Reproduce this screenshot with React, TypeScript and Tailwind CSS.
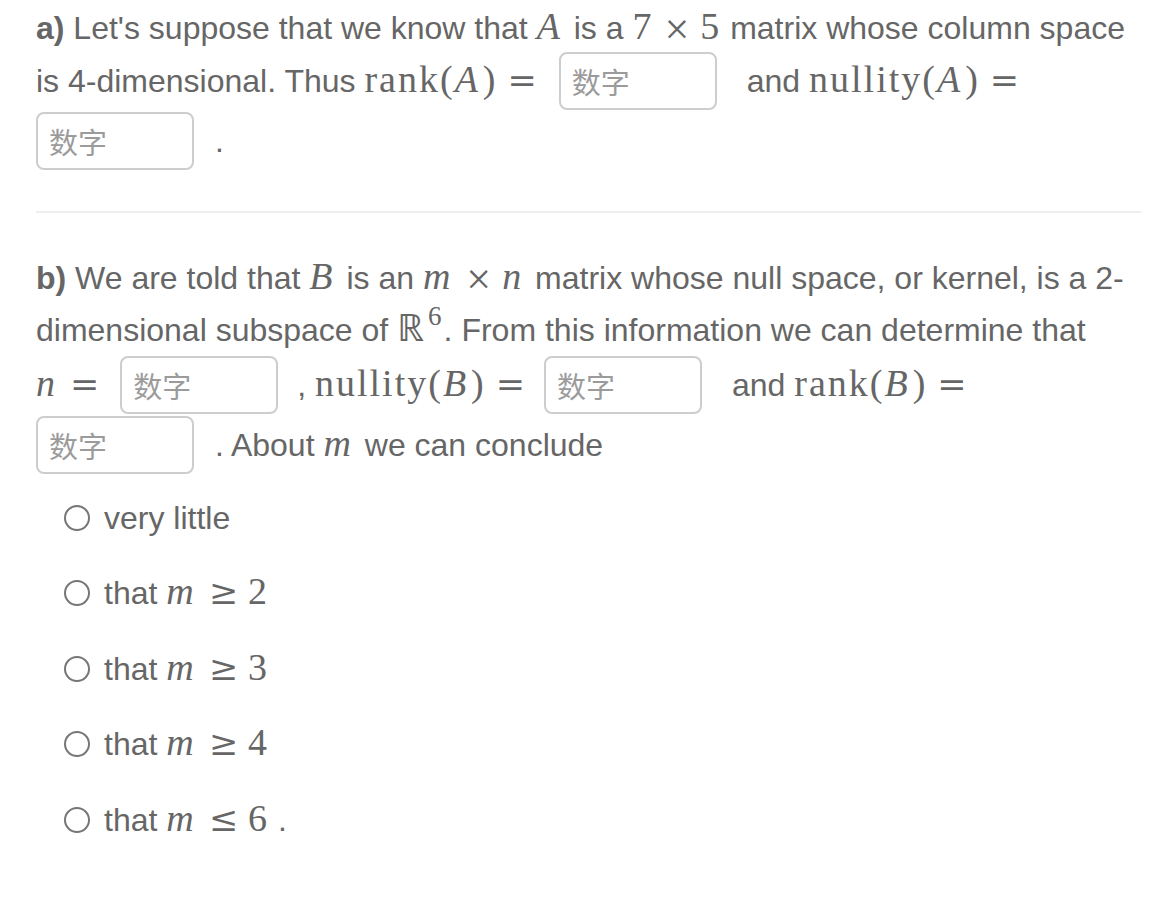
import React from 'react';

type Kids = { children?: React.ReactNode };

function Blank({ className = '' }: { className?: string }) {
  return (
    <input
      type="text"
      placeholder="数字"
      className={`box-border inline-block h-[58px] w-[158px] rounded-[8px] border-2 border-[#cdcdcd] bg-white px-[11px] align-top font-['Noto_Sans_CJK_SC',sans-serif] text-[29px] text-[#333] outline-none placeholder:text-[#9b9b9b] ${className}`}
    />
  );
}

// math runs (upright by default, variables go in <V>)
function M({ children }: Kids) {
  return (
    <span className="font-['Liberation_Serif',serif] text-[38px] leading-none tracking-[2px]">{children}</span>
  );
}

function V({ children }: Kids) {
  return <i className="mr-[3px] italic">{children}</i>;
}

// relation symbols are wider in the TeX fonts
function Rel({ children }: Kids) {
  return (
    <span className="mx-[10px] font-['DejaVu_Serif',serif] text-[35px] font-light tracking-normal">{children}</span>
  );
}

function Times() {
  return <span className="mx-[11px] align-[-5px] text-[44px] leading-[0] tracking-normal">×</span>;
}

function Radio({ children }: Kids) {
  return (
    <li className="flex h-[75.5px] items-center">
      <span className="ml-[28px] mr-[14px] box-border h-[26px] w-[26px] shrink-0 rounded-full border-2 border-[#767676] bg-white" />
      <span className="whitespace-nowrap">{children}</span>
    </li>
  );
}

export default function App() {
  return (
    <div className="min-h-[910px] w-full bg-white pl-[36px] pr-[31px] font-['Liberation_Sans',Arial,sans-serif] text-[32px] text-[#666]">
      {/* part a */}
      <section>
        <div className="h-[52px] whitespace-nowrap pt-[4px] leading-[48px]">
          <b>a)</b> Let's suppose that we know that{' '}
          <M>
            <V>A</V>
          </M>{' '}
          is a{' '}
          <M>
            7<Times />5
          </M>{' '}
          matrix whose column space
        </div>
        <div className="h-[58px] whitespace-nowrap leading-[58px]">
          is 4-dimensional. Thus{' '}
          <M>
            rank(<V>A</V>)<Rel>=</Rel>
          </M>
          <Blank className="ml-[12px] mr-[21px]" /> and{' '}
          <M>
            nullity(<V>A</V>)<Rel>=</Rel>
          </M>
        </div>
        <div className="mt-[2px] h-[58px] whitespace-nowrap leading-[58px]">
          <Blank className="mr-[12px]" /> .
        </div>
      </section>

      <hr className="mt-[41px] h-[2px] border-0 bg-[#eeeeee]" />

      {/* part b */}
      <section className="mt-[39px]">
        <div className="h-[52px] whitespace-nowrap leading-[52px]">
          <b>b)</b> We are told that{' '}
          <M>
            <V>B</V>
          </M>{' '}
          is an{' '}
          <M>
            <V>m</V>
            <Times />
            <V>n</V>
          </M>{' '}
          matrix whose null space, or kernel, is a 2-
        </div>
        <div className="h-[52px] whitespace-nowrap leading-[52px]">
          dimensional subspace of{' '}
          <M>
            ℝ<span className="relative -top-[16px] ml-[2px] text-[27px]">6</span>
          </M>
          . From this information we can determine that
        </div>
        <div className="h-[58px] whitespace-nowrap leading-[58px]">
          <M>
            <V>n</V>
            <Rel>=</Rel>
          </M>
          <Blank className="ml-[11px] mr-[10px]" /> ,{' '}
          <M>
            nullity(<V>B</V>)<Rel>=</Rel>
          </M>
          <Blank className="ml-[9px] mr-[21px]" /> and{' '}
          <M>
            rank(<V>B</V>)<Rel>=</Rel>
          </M>
        </div>
        <div className="mt-[2px] h-[58px] whitespace-nowrap leading-[58px]">
          <Blank className="mr-[12px]" /> . About{' '}
          <M>
            <V>m</V>
          </M>{' '}
          we can conclude
        </div>

        <ul className="mt-[6px]">
          <Radio>very little</Radio>
          <Radio>
            that{' '}
            <M>
              <V>m</V>
              <Rel>≥</Rel>2
            </M>
          </Radio>
          <Radio>
            that{' '}
            <M>
              <V>m</V>
              <Rel>≥</Rel>3
            </M>
          </Radio>
          <Radio>
            that{' '}
            <M>
              <V>m</V>
              <Rel>≥</Rel>4
            </M>
          </Radio>
          <Radio>
            that{' '}
            <M>
              <V>m</V>
              <Rel>≤</Rel>6
            </M>{' '}
            .
          </Radio>
        </ul>
      </section>
    </div>
  );
}
